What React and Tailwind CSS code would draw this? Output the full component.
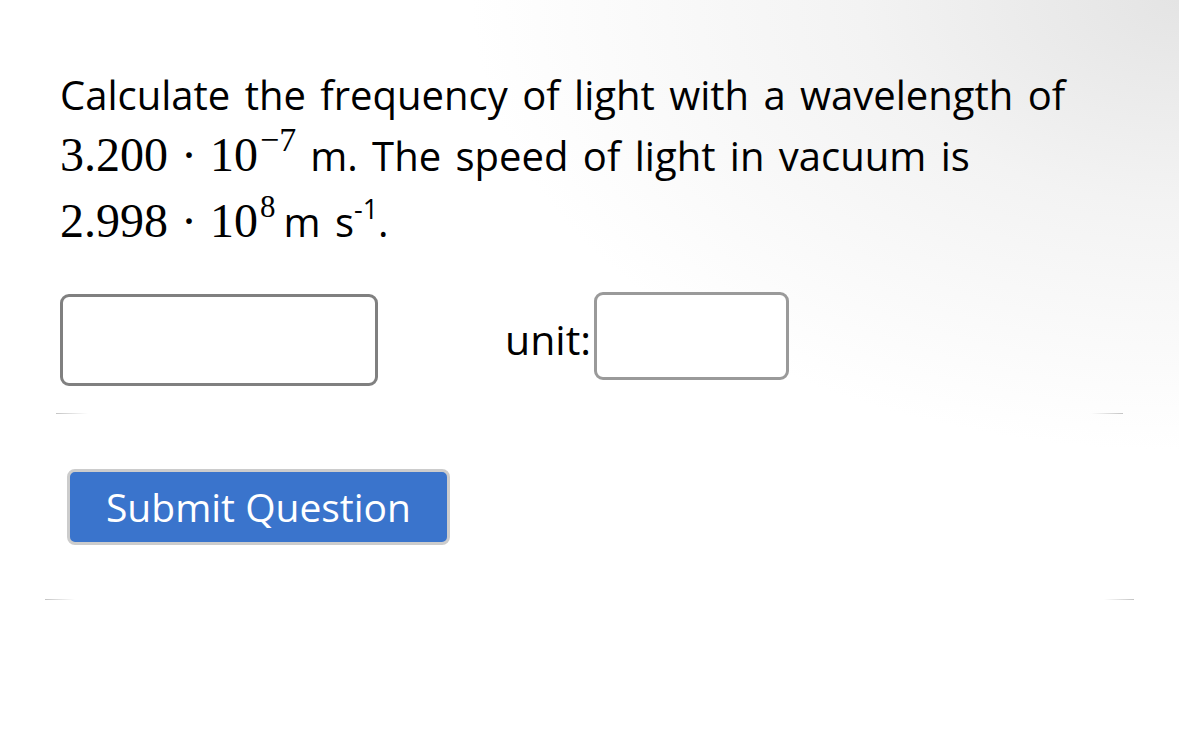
export default function App() {
    return (
        <div className="relative min-h-[751px] w-full overflow-hidden bg-white font-['Open_Sans',sans-serif] text-black">
            <div className="pointer-events-none absolute inset-0 bg-[radial-gradient(ellipse_60%_60%_at_100%_0%,#e4e4e4_0%,#f3f3f3_45%,rgba(255,255,255,0)_100%)]" />

            <div className="relative pl-[60px] pt-[65px]">
                <div className="text-[40px] leading-[60px] [word-spacing:4px]">
                    <div>Calculate the frequency of light with a wavelength of</div>
                    <div>
                        <span className="font-['Liberation_Serif',serif] text-[48px] [word-spacing:0px]">
                            3.200<span className="mx-[13px]">·</span>10
                            <sup className="ml-[2px] top-[-20px] text-[34px]">−7</sup>
                        </span>
                        <span className="ml-[14px]">m. The speed of light in vacuum is</span>
                    </div>
                    <div className="mt-[5px]">
                        <span className="font-['Liberation_Serif',serif] text-[48px] [word-spacing:0px]">
                            2.998<span className="mx-[13px]">·</span>10
                            <sup className="ml-[2px] top-[-20px] text-[31px]">8</sup>
                        </span>
                        <span className="ml-[8px]">
                            m s<sup className="top-[-18px] text-[27px]">-1</sup>.
                        </span>
                    </div>
                </div>

                <div className="mt-[42px] flex items-start">
                    <div className="h-[92px] w-[318px] rounded-[9px] border-[3px] border-[#808080] bg-white" />
                    <span className="ml-[127px] mt-[15px] text-[41px]">unit:</span>
                    <div className="-mt-[2px] ml-[3px] h-[88px] w-[195px] rounded-[9px] border-[3px] border-[#9a9a9a] bg-white" />
                </div>
            </div>

            <div className="relative mx-[56px] mt-[27px] h-px bg-[linear-gradient(to_right,#c4c4c4_0px,rgba(200,200,200,0)_32px,rgba(200,200,200,0)_calc(100%-32px),#c4c4c4_100%)]" />

            <div className="relative pl-[67px] pt-[55px]">
                <button className="h-[76px] w-[383px] rounded-[8px] border-[3px] border-[#cccccc] bg-[#3a74cc] text-[39px] text-white">
                    Submit Question
                </button>
            </div>

            <div className="relative mx-[45px] mt-[54px] h-px bg-[linear-gradient(to_right,#c4c4c4_0px,rgba(200,200,200,0)_30px,rgba(200,200,200,0)_calc(100%-30px),#c4c4c4_100%)]" />
        </div>
    );
}
